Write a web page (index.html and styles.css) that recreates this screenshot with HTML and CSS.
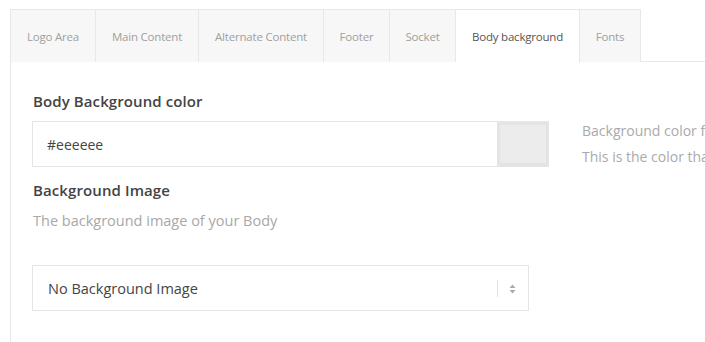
FILE: index.html
```html
<!DOCTYPE html>
<html>
<head>
<meta charset="utf-8">
<link rel="stylesheet" href="styles.css">
</head>
<body>
<div class="page">
  <ul class="tabs">
    <li class="tab">Logo Area</li>
    <li class="tab">Main Content</li>
    <li class="tab">Alternate Content</li>
    <li class="tab">Footer</li>
    <li class="tab">Socket</li>
    <li class="tab active">Body background</li>
    <li class="tab">Fonts</li>
  </ul>
  <div class="panel">
    <div class="field">
      <h3 class="label">Body Background color</h3>
      <div class="row">
        <div class="color-input">
          <div class="text-input">#eeeeee</div>
          <div class="swatch"><span class="swatch-inner"></span></div>
        </div>
        <div class="help">
          <p>Background color for your site</p>
          <p>This is the color that is displayed</p>
        </div>
      </div>
    </div>
    <div class="field">
      <h3 class="label">Background Image</h3>
      <p class="desc">The background image of your Body</p>
      <div class="select">
        <span class="select-text">No Background Image</span>
        <span class="select-sep"></span>
        <svg class="select-arrows" width="7" height="10" viewBox="0 0 7 10"><path d="M3.5 0.5 L6.5 4 L0.5 4 Z M3.5 9.5 L6.5 6 L0.5 6 Z" fill="#aaa"/></svg>
      </div>
    </div>
  </div>
</div>
</body>
</html>
```
FILE: styles.css
```css
html, body {
  margin: 0;
  padding: 0;
  background: #fff;
  overflow: hidden;
}
body {
  font-family: "Open Sans", "Noto Sans", sans-serif;
  width: 705px;
  height: 342px;
}
.page {
  padding: 9px 0 0 10px;
}
.tabs {
  display: flex;
  list-style: none;
  margin: 0;
  padding: 0;
  border-bottom: 1px solid #e8e8e8;
  height: 52px;
}
.tab {
  box-sizing: border-box;
  height: 53px;
  border-top: 1px solid #e8e8e8;
  border-right: 1px solid #e8e8e8;
  background: #f7f7f7;
  color: #a0a0a0;
  font-size: 11.5px;
  display: flex;
  align-items: center;
  justify-content: center;
  padding: 0;
  letter-spacing: -0.2px;
  white-space: nowrap;
}
.tab:first-child {
  border-left: 1px solid #e8e8e8;
}
.tab:nth-child(1) { width: 86px; }
.tab:nth-child(2) { width: 103px; }
.tab:nth-child(3) { width: 125px; }
.tab:nth-child(4) { width: 66px; }
.tab:nth-child(5) { width: 66px; }
.tab:nth-child(6) { width: 124px; }
.tab:nth-child(7) { width: 61px; }
.tab.active {
  background: #fff;
  color: #555;
  height: 54px;
  position: relative;
  z-index: 1;
}
.panel {
  box-sizing: border-box;
  border-left: 1px solid #e8e8e8;
  padding: 29px 0 0 21px;
  height: 281px;
  overflow: hidden;
}
.label {
  margin: 0 0 0 1px;
  font-size: 15px;
  font-weight: 600;
  color: #444;
  line-height: 20px;
  letter-spacing: 0.1px;
}
.row {
  display: flex;
  margin-top: 10px;
}
.color-input {
  display: flex;
  flex: none;
  width: 517px;
  height: 46px;
}
.text-input {
  box-sizing: border-box;
  width: 465px;
  height: 46px;
  border: 1px solid #e5e5e5;
  border-right: none;
  padding: 0 14px;
  display: flex;
  align-items: center;
  font-size: 14px;
  color: #444;
}
.swatch {
  box-sizing: border-box;
  width: 52px;
  height: 46px;
  background: #e4e4e4;
  padding: 3px 3px 4px 3px;
  border-top: 1px solid #e9e9e9;
}
.swatch-inner {
  display: block;
  width: 100%;
  height: 100%;
  background: #ececec;
}
.help {
  margin-left: 33px;
  white-space: nowrap;
  font-size: 14px;
  color: #aaa;
  line-height: 26px;
  margin-top: -3px;
}
.help p {
  margin: 0;
}
.field + .field {
  margin-top: 10px;
}
.desc {
  margin: 11px 0 0 1px;
  font-size: 14.5px;
  color: #a8a8a8;
  line-height: 20px;
}
.select {
  box-sizing: border-box;
  margin-top: 34px;
  width: 497px;
  height: 46px;
  border: 1px solid #e5e5e5;
  display: flex;
  align-items: center;
  padding: 1px 10px 0 15px;
}
.select-text {
  flex: 1;
  font-size: 14.5px;
  color: #444;
}
.select-sep {
  width: 1px;
  height: 17px;
  background: #e3e3e3;
  margin-right: 11px;
}
.select-arrows {
  margin-right: 2px;
}
```
